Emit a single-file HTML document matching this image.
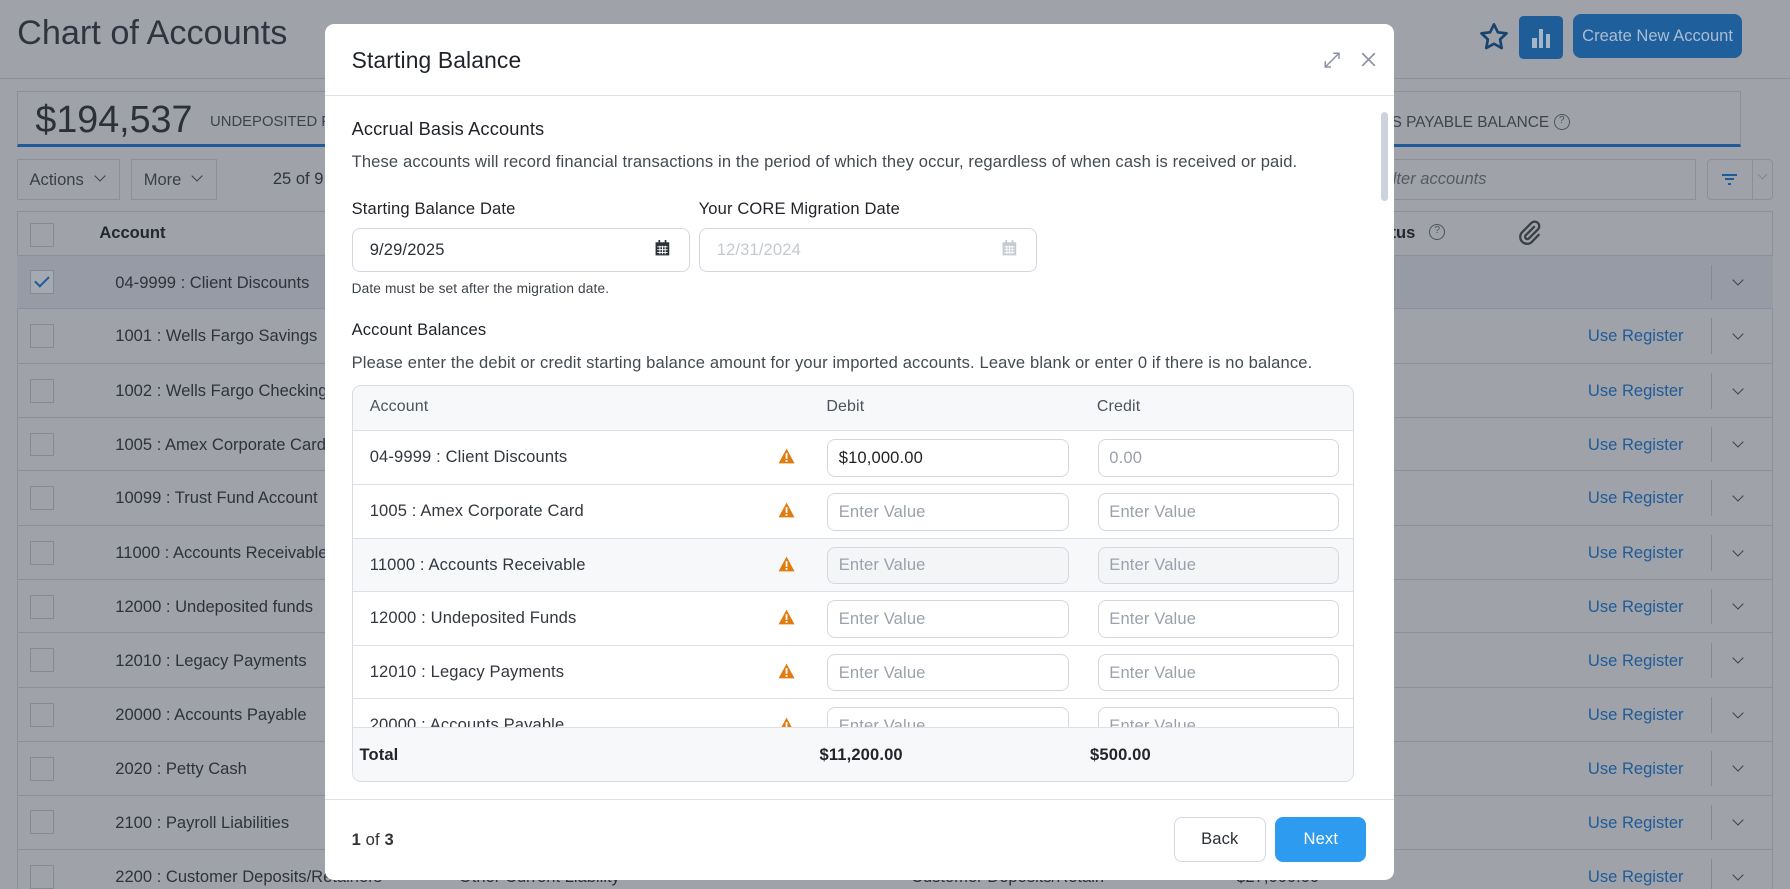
<!DOCTYPE html>
<html><head><meta charset="utf-8">
<style>
*{box-sizing:border-box;margin:0;padding:0}
html,body{width:1790px;height:889px;overflow:hidden}
body{zoom:1.14158;font-family:"Liberation Sans",sans-serif;background:#9fa2a9;color:#2b3038;position:relative;width:1568px;height:779px}
.a{position:absolute}
.row{position:absolute;left:15px;width:1538px;height:47px;border-top:1px solid #8b8f97;font-size:14.5px}
.cb{position:absolute;left:11px;top:13px;width:21px;height:21px;border:1px solid #858991}
.row .t{position:absolute;left:86px;top:15px;color:#2e333b}
.row .ur{position:absolute;left:1376px;top:15px;color:#1f5b98}
.row .dv{position:absolute;left:1484px;top:8px;width:1px;height:31px;background:#858991}
.chev{position:absolute;width:7px;height:7px;border-right:1.5px solid #3b3f46;border-bottom:1.5px solid #3b3f46;transform:rotate(45deg)}
.modal{position:absolute;left:285px;top:21px;width:936px;height:750px;background:#fff;border-radius:8px;overflow:hidden;letter-spacing:0.12px}
.m{position:absolute}
.inp{position:absolute;border:1px solid #d3d8e0;border-radius:7px;background:#fff;font-size:14.5px;padding-left:9px;display:flex;align-items:center}
.ph{color:#9aa1ad}
.tr{position:absolute;left:0;width:876px;height:47px;border-top:1px solid #dde1e7}
.tr .n{position:absolute;left:15px;top:14px;font-size:14.5px;color:#333840}
.warn{position:absolute;left:373px;top:15px}
.tr .d{left:416px;top:7px;width:212px;height:33px}
.tr .c{left:653px;top:7px;width:211px;height:33px}
.gray{background:#f7f8fa}
.gray .inp{background:#f4f5f7}
</style></head><body>
<div class="a" style="left:15px;top:12px;font-size:30px;color:#2f3540">Chart of Accounts</div>
<div class="a" style="left:0;top:68px;width:1568px;height:1px;background:#8b8f97"></div>
<svg class="a" style="left:1295px;top:18px" width="28" height="28" viewBox="0 0 24 24"><path d="M12 2.5l2.9 6 6.5.8-4.8 4.5 1.2 6.5L12 17.1l-5.8 3.2 1.2-6.5L2.6 9.3l6.5-.8z" fill="none" stroke="#17446e" stroke-width="2" stroke-linejoin="round"/></svg>
<div class="a" style="left:1331px;top:14px;width:38px;height:38px;background:#1f5d98;border-radius:4px"></div>
<div class="a" style="left:1342px;top:33px;width:4px;height:9px;background:#a5b5c8"></div>
<div class="a" style="left:1348px;top:25px;width:4px;height:17px;background:#a5b5c8"></div>
<div class="a" style="left:1354px;top:30px;width:4px;height:12px;background:#a5b5c8"></div>
<div class="a" style="left:1378px;top:12px;width:148px;height:39px;background:#1f5f9c;border-radius:7px;color:#a9bdd3;font-size:14.5px;text-align:center;line-height:39px">Create New Account</div>
<div class="a" style="left:15px;top:80px;width:1510px;height:49px;border:1px solid #8b8f97;border-bottom:3px solid #1f5b98"></div>
<div class="a" style="left:31px;top:86px;font-size:33px;color:#2c3139">$194,537</div>
<div class="a" style="left:184px;top:100px;font-size:13px;color:#3e434b">UNDEPOSITED F</div>
<div class="a" style="left:1201px;top:100px;font-size:13.5px;color:#3e434b">NTS PAYABLE BALANCE</div>
<div class="a" style="left:1361px;top:100px;width:14px;height:14px;border:1.5px solid #4f545c;border-radius:50%;font-size:9px;text-align:center;line-height:11px;color:#4f545c">?</div>
<div class="a" style="left:15px;top:139px;width:90px;height:36px;border:1px solid #8b8f97;font-size:14.5px;padding:9px 0 0 10px;color:#3a3f47">Actions</div>
<div class="chev" style="left:84px;top:151px"></div>
<div class="a" style="left:115px;top:139px;width:75px;height:36px;border:1px solid #8b8f97;font-size:14.5px;padding:9px 0 0 10px;color:#3a3f47">More</div>
<div class="chev" style="left:169px;top:151px"></div>
<div class="a" style="left:239px;top:148px;font-size:14.5px;color:#2f343c">25 of 9</div>
<div class="a" style="left:1190px;top:139px;width:296px;height:36px;border:1px solid #8b8f97"></div>
<div class="a" style="left:1220px;top:148px;font-size:14.5px;font-style:italic;color:#555a62">lter accounts</div>
<div class="a" style="left:1495px;top:139px;width:58px;height:36px;border:1px solid #8b8f97;border-radius:4px"></div>
<div class="a" style="left:1535px;top:139px;width:1px;height:36px;background:#8b8f97"></div>
<div class="chev" style="left:1541px;top:150px;width:6px;height:6px;border-color:#80858d;border-width:1px"></div>
<div class="a" style="left:1508px;top:152px;width:14px;height:2px;background:#1f5b98"></div>
<div class="a" style="left:1511px;top:156px;width:8px;height:2px;background:#1f5b98"></div>
<div class="a" style="left:1514px;top:160px;width:2px;height:2px;background:#1f5b98"></div>
<div class="a" style="left:15px;top:185px;width:1538px;height:600px;border:1px solid #8b8f97"></div>
<div class="cb" style="left:26px;top:195px"></div>
<div class="a" style="left:87px;top:195px;font-size:14.5px;font-weight:bold;color:#23272e">Account</div>
<div class="a" style="left:1210px;top:195px;font-size:14.5px;font-weight:bold;color:#23272e">atus</div>
<div class="a" style="left:1252px;top:196px;width:14px;height:14px;border:1.5px solid #4f545c;border-radius:50%;font-size:9px;text-align:center;line-height:11px;color:#4f545c">?</div>
<svg class="a" style="left:1329px;top:193px" width="22" height="22" viewBox="0 0 22 22"><path d="M15 6l-7.5 7.5a2 2 0 0 0 2.8 2.8l8-8a4 4 0 0 0-5.7-5.7l-8 8a6 6 0 0 0 8.5 8.5L19 13" fill="none" stroke="#3a3f46" stroke-width="2" stroke-linecap="round"/></svg>
<div class="row" style="top:223px;background:#979ba5"><div class="cb" style="background:#a4a9b2"></div><div class="a" style="left:16px;top:18px;width:12px;height:7px;border-left:2px solid #1f5b98;border-bottom:2px solid #1f5b98;transform:rotate(-45deg)"></div><div class="t">04-9999 : Client Discounts</div><div class="dv"></div><div class="chev" style="left:1504px;top:18px"></div></div>
<div class="row" style="top:270px"><div class="cb"></div><div class="t">1001 : Wells Fargo Savings</div><div class="ur">Use Register</div><div class="dv"></div><div class="chev" style="left:1504px;top:18px"></div></div>
<div class="row" style="top:318px"><div class="cb"></div><div class="t">1002 : Wells Fargo Checking</div><div class="ur">Use Register</div><div class="dv"></div><div class="chev" style="left:1504px;top:18px"></div></div>
<div class="row" style="top:365px"><div class="cb"></div><div class="t">1005 : Amex Corporate Card</div><div class="ur">Use Register</div><div class="dv"></div><div class="chev" style="left:1504px;top:18px"></div></div>
<div class="row" style="top:412px"><div class="cb"></div><div class="t">10099 : Trust Fund Account</div><div class="ur">Use Register</div><div class="dv"></div><div class="chev" style="left:1504px;top:18px"></div></div>
<div class="row" style="top:460px"><div class="cb"></div><div class="t">11000 : Accounts Receivable</div><div class="ur">Use Register</div><div class="dv"></div><div class="chev" style="left:1504px;top:18px"></div></div>
<div class="row" style="top:507px"><div class="cb"></div><div class="t">12000 : Undeposited funds</div><div class="ur">Use Register</div><div class="dv"></div><div class="chev" style="left:1504px;top:18px"></div></div>
<div class="row" style="top:554px"><div class="cb"></div><div class="t">12010 : Legacy Payments</div><div class="ur">Use Register</div><div class="dv"></div><div class="chev" style="left:1504px;top:18px"></div></div>
<div class="row" style="top:602px"><div class="cb"></div><div class="t">20000 : Accounts Payable</div><div class="ur">Use Register</div><div class="dv"></div><div class="chev" style="left:1504px;top:18px"></div></div>
<div class="row" style="top:649px"><div class="cb"></div><div class="t">2020 : Petty Cash</div><div class="ur">Use Register</div><div class="dv"></div><div class="chev" style="left:1504px;top:18px"></div></div>
<div class="row" style="top:696px"><div class="cb"></div><div class="t">2100 : Payroll Liabilities</div><div class="ur">Use Register</div><div class="dv"></div><div class="chev" style="left:1504px;top:18px"></div></div>
<div class="row" style="top:744px"><div class="cb"></div><div class="t">2200 : Customer Deposits/Retainers</div><div class="a" style="left:387px;top:15px">Other Current Liability</div><div class="a" style="left:783px;top:15px">Customer Deposits/Retain</div><div class="a" style="left:1068px;top:15px">$27,000.00</div><div class="ur">Use Register</div><div class="dv"></div><div class="chev" style="left:1504px;top:18px"></div></div>

<div class="modal">
 <div class="m" style="left:23px;top:20px;font-size:20px;color:#1f2329">Starting Balance</div>
 <svg class="m" style="left:874px;top:24px" width="16" height="16" viewBox="0 0 16 16"><path d="M2 14L14 2M9 2h5v5M2 9v5h5" fill="none" stroke="#8a93a3" stroke-width="1.3"/></svg>
 <svg class="m" style="left:906px;top:24px" width="15" height="15" viewBox="0 0 15 15"><path d="M2 2L13 13M13 2L2 13" stroke="#8a93a3" stroke-width="1.5"/></svg>
 <div class="m" style="left:0;top:62px;width:936px;height:1px;background:#dde1e8"></div>
 <div class="m" style="left:925px;top:77px;width:6px;height:78px;background:#cdd3dc;border-radius:3px"></div>
 <div class="m" style="left:23px;top:82px;font-size:16px;color:#1f2329">Accrual Basis Accounts</div>
 <div class="m" style="left:23px;top:112px;font-size:14.5px;color:#444a52">These accounts will record financial transactions in the period of which they occur, regardless of when cash is received or paid.</div>
 <div class="m" style="left:23px;top:153px;font-size:14.5px;color:#1f2329">Starting Balance Date</div>
 <div class="m" style="left:327px;top:153px;font-size:14.5px;color:#1f2329">Your CORE Migration Date</div>
 <div class="inp" style="left:23px;top:179px;width:296px;height:38px;padding-left:15px">9/29/2025</div>
 <div class="inp" style="left:327px;top:179px;width:296px;height:38px;padding-left:15px;color:#c4c9d1">12/31/2024</div>
 <svg class="m" style="left:289px;top:189px" width="13" height="14" viewBox="0 0 13 14"><rect x="0.5" y="2" width="12" height="11.5" fill="#2c3138"/><rect x="3" y="0" width="1.5" height="3" fill="#2c3138"/><rect x="8.5" y="0" width="1.5" height="3" fill="#2c3138"/><path d="M2 6h9M2 8.5h9M2 11h9M4.3 5v7.5M6.6 5v7.5M8.9 5v7.5" stroke="#fff" stroke-width=".8"/></svg>
 <svg class="m" style="left:593px;top:189px" width="13" height="14" viewBox="0 0 13 14"><rect x="0.5" y="2" width="12" height="11.5" fill="#c6cbd3"/><rect x="3" y="0" width="1.5" height="3" fill="#c6cbd3"/><rect x="8.5" y="0" width="1.5" height="3" fill="#c6cbd3"/><path d="M2 6h9M2 8.5h9M2 11h9M4.3 5v7.5M6.6 5v7.5M8.9 5v7.5" stroke="#fff" stroke-width=".8"/></svg>
 <div class="m" style="left:23px;top:225px;font-size:12px;color:#3d434b">Date must be set after the migration date.</div>
 <div class="m" style="left:23px;top:259px;font-size:14.5px;color:#1f2329">Account Balances</div>
 <div class="m" style="left:23px;top:288px;font-size:14.5px;color:#444a52">Please enter the debit or credit starting balance amount for your imported accounts. Leave blank or enter 0 if there is no balance.</div>
 <div class="m" style="left:23px;top:316px;width:878px;height:348px;border:1px solid #d8dde4;border-radius:8px;overflow:hidden">
  <div class="m gray" style="left:0;top:0;width:876px;height:39px"></div>
  <div class="m" style="left:15px;top:11px;font-size:14px;color:#4d535c">Account</div>
  <div class="m" style="left:415px;top:11px;font-size:14px;color:#4d535c">Debit</div>
  <div class="m" style="left:652px;top:11px;font-size:14px;color:#4d535c">Credit</div>
  <div class="tr" style="top:39px"><div class="n">04-9999 : Client Discounts</div><svg class="warn" width="15" height="14" viewBox="0 0 15 14"><path d="M7.5 0.5L14.5 13.5H0.5Z" fill="#e07b10"/><rect x="6.7" y="4.5" width="1.6" height="5" fill="#fff"/><rect x="6.7" y="10.5" width="1.6" height="1.6" fill="#fff"/></svg><div class="inp d" style="color:#222">$10,000.00</div><div class="inp c ph">0.00</div></div>
  <div class="tr" style="top:86px"><div class="n">1005 : Amex Corporate Card</div><svg class="warn" width="15" height="14" viewBox="0 0 15 14"><path d="M7.5 0.5L14.5 13.5H0.5Z" fill="#e07b10"/><rect x="6.7" y="4.5" width="1.6" height="5" fill="#fff"/><rect x="6.7" y="10.5" width="1.6" height="1.6" fill="#fff"/></svg><div class="inp d ph">Enter Value</div><div class="inp c ph">Enter Value</div></div>
  <div class="tr gray" style="top:133px"><div class="n">11000 : Accounts Receivable</div><svg class="warn" width="15" height="14" viewBox="0 0 15 14"><path d="M7.5 0.5L14.5 13.5H0.5Z" fill="#e07b10"/><rect x="6.7" y="4.5" width="1.6" height="5" fill="#fff"/><rect x="6.7" y="10.5" width="1.6" height="1.6" fill="#fff"/></svg><div class="inp d ph">Enter Value</div><div class="inp c ph">Enter Value</div></div>
  <div class="tr" style="top:180px"><div class="n">12000 : Undeposited Funds</div><svg class="warn" width="15" height="14" viewBox="0 0 15 14"><path d="M7.5 0.5L14.5 13.5H0.5Z" fill="#e07b10"/><rect x="6.7" y="4.5" width="1.6" height="5" fill="#fff"/><rect x="6.7" y="10.5" width="1.6" height="1.6" fill="#fff"/></svg><div class="inp d ph">Enter Value</div><div class="inp c ph">Enter Value</div></div>
  <div class="tr" style="top:227px"><div class="n">12010 : Legacy Payments</div><svg class="warn" width="15" height="14" viewBox="0 0 15 14"><path d="M7.5 0.5L14.5 13.5H0.5Z" fill="#e07b10"/><rect x="6.7" y="4.5" width="1.6" height="5" fill="#fff"/><rect x="6.7" y="10.5" width="1.6" height="1.6" fill="#fff"/></svg><div class="inp d ph">Enter Value</div><div class="inp c ph">Enter Value</div></div>
  <div class="tr" style="top:274px"><div class="n">20000 : Accounts Payable</div><svg class="warn" width="15" height="14" viewBox="0 0 15 14"><path d="M7.5 0.5L14.5 13.5H0.5Z" fill="#e07b10"/><rect x="6.7" y="4.5" width="1.6" height="5" fill="#fff"/><rect x="6.7" y="10.5" width="1.6" height="1.6" fill="#fff"/></svg><div class="inp d ph">Enter Value</div><div class="inp c ph">Enter Value</div></div>
  <div class="m gray" style="left:0;top:299px;width:876px;height:48px;border-top:1px solid #dde1e7"></div>
  <div class="m" style="left:6px;top:315px;font-size:14.5px;font-weight:bold;color:#22262c">Total</div>
  <div class="m" style="left:409px;top:315px;font-size:14.5px;font-weight:bold;color:#22262c">$11,200.00</div>
  <div class="m" style="left:646px;top:315px;font-size:14.5px;font-weight:bold;color:#22262c">$500.00</div>
 </div>
 <div class="m" style="left:0;top:679px;width:936px;height:1px;background:#dde1e8"></div>
 <div class="m" style="left:23px;top:706px;font-size:14.5px;color:#333"><b>1</b> of <b>3</b></div>
 <div class="m" style="left:743px;top:695px;width:81px;height:39px;border:1px solid #d3d8e0;border-radius:7px;font-size:14.5px;text-align:center;line-height:37px;color:#2b3038">Back</div>
 <div class="m" style="left:832px;top:695px;width:80px;height:39px;background:#2d9bf0;border-radius:7px;font-size:14.5px;text-align:center;line-height:39px;color:#fff">Next</div>
</div>
</body></html>
